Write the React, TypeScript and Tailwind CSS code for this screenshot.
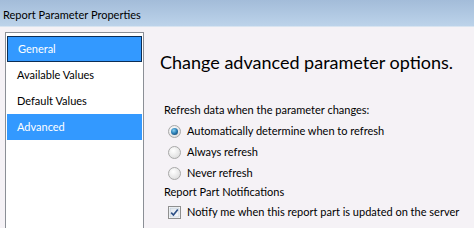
const items = [
  { label: "General", selected: true, focused: true },
  { label: "Available Values", selected: false, focused: false },
  { label: "Default Values", selected: false, focused: false },
  { label: "Advanced", selected: true, focused: false },
];

const radios = [
  { label: "Automatically determine when to refresh", checked: true, h: "h-[21px]" },
  { label: "Always refresh", checked: false, h: "h-[21px]" },
  { label: "Never refresh", checked: false, h: "h-[20px]" },
];

function Radio({ checked }: { checked: boolean }) {
  return (
    <svg width="13" height="13" viewBox="0 0 13 13">
      <defs>
        <radialGradient id="rbg" cx="0.4" cy="0.35" r="0.7">
          <stop offset="0" stopColor="#ffffff" />
          <stop offset="1" stopColor="#dcdcdc" />
        </radialGradient>
        <radialGradient id="rdot" cx="0.4" cy="0.35" r="0.7">
          <stop offset="0" stopColor="#8ad1f2" />
          <stop offset="0.6" stopColor="#2a7fb6" />
          <stop offset="1" stopColor="#1a4f7a" />
        </radialGradient>
      </defs>
      <circle cx="6.5" cy="6.5" r="6" fill="url(#rbg)" stroke="#a8a8a8" />
      {checked ? <circle cx="6.5" cy="6.5" r="3.5" fill="url(#rdot)" /> : null}
    </svg>
  );
}

function Checkbox() {
  return (
    <svg width="13" height="13" viewBox="0 0 13 13">
      <defs>
        <linearGradient id="cbg" x1="0" y1="0" x2="1" y2="1">
          <stop offset="0" stopColor="#dfe6ee" />
          <stop offset="1" stopColor="#f8f9fb" />
        </linearGradient>
      </defs>
      <rect x="0.5" y="0.5" width="12" height="12" fill="#ffffff" stroke="#8f8f8f" />
      <rect x="2" y="2" width="9" height="9" fill="url(#cbg)" stroke="#b6c3d1" strokeWidth="0.6" />
      <path d="M3.2 6.6 L5.4 9 L9.8 3.4" fill="none" stroke="#2d4f86" strokeWidth="1.6" />
    </svg>
  );
}

export default function App() {
  return (
    <div
      className="flex h-[228px] w-[474px] flex-col overflow-hidden bg-[#f5f2f6] text-[11px] text-black"
      style={{ fontFamily: 'Lato, "Noto Sans", sans-serif' }}
    >
      <div className="flex h-[27px] shrink-0 items-center border-b border-[#d8e4f0] bg-gradient-to-b from-[#a3bcd9] to-[#bcd3ea] pl-[3px] pt-[5px]">
        Report Parameter Properties
      </div>
      <div className="flex min-h-0 flex-1">
        <div className="pl-[5px] pt-[5px]">
          <div className="h-[220px] w-[139px] border border-[#8b8f96] bg-white px-px pt-[3px]">
            {items.map((item) => (
              <div
                key={item.label}
                className={`flex h-[26px] items-center pl-[10px] ${
                  item.selected ? "bg-[#3399ff] text-white" : ""
                } ${item.focused ? "border border-[#0c2e55]" : ""}`}
              >
                {item.label}
              </div>
            ))}
          </div>
        </div>
        <div className="flex flex-col whitespace-nowrap pl-[16px] pt-[23px]">
          <div className="text-[18px] leading-[24px]">Change advanced parameter options.</div>
          <div className="mt-[26px] pl-[4px]">
            <div className="flex h-[21px] items-center">Refresh data when the parameter changes:</div>
            <div className="flex flex-col pl-[4px]">
              {radios.map((r) => (
                <div key={r.label} className={`flex items-center gap-[6px] ${r.h}`}>
                  <Radio checked={r.checked} />
                  <span>{r.label}</span>
                </div>
              ))}
            </div>
            <div className="flex h-[19px] items-center">Report Part Notifications</div>
            <div className="flex h-[21px] items-center gap-[6px] pl-[4px]">
              <Checkbox />
              <span>Notify me when this report part is updated on the server</span>
            </div>
          </div>
        </div>
      </div>
    </div>
  );
}
